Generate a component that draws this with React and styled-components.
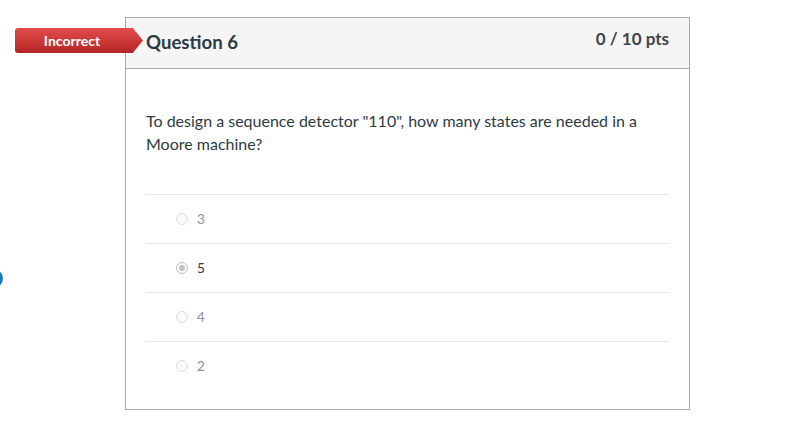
import React from 'react';
import styled, { createGlobalStyle } from 'styled-components';

const GlobalStyle = createGlobalStyle`
    body {
        margin: 0;
        background: white;
        font-family: Lato, "Noto Sans", sans-serif;
        color: #2d3b45;
    }
`;

const answers = [
    { text: '3', selected: false },
    { text: '5', selected: true },
    { text: '4', selected: false },
    { text: '2', selected: false },
];

function App() {
    return (
        <Page>
            <GlobalStyle />
            <SideDot />
            <Card>
                <Badge>Incorrect</Badge>
                <Header>
                    <Title>Question 6</Title>
                    <Points>0 / 10 pts</Points>
                </Header>
                <Body>
                    <QuestionText>
                        To design a sequence detector "110", how many states are needed in a Moore machine?
                    </QuestionText>
                    <AnswerList>
                        {answers.map(a => (
                            <AnswerRow key={a.text}>
                                <Radio selected={a.selected} />
                                <AnswerText selected={a.selected}>{a.text}</AnswerText>
                            </AnswerRow>
                        ))}
                    </AnswerList>
                </Body>
            </Card>
        </Page>
    );
}

const Page = styled.div`
    position: relative;
    width: 799px;
    height: 435px;
    overflow: hidden;
    padding: 17px 0 0 125px;
    box-sizing: border-box;
`;

const SideDot = styled.div`
    position: absolute;
    left: -16px;
    top: 269px;
    width: 19px;
    height: 19px;
    border-radius: 50%;
    background: #1a7bbd;
`;

const Card = styled.div`
    position: relative;
    width: 565px;
    border: 1px solid #a8a8a8;
    box-sizing: border-box;
    background: white;
`;

const Badge = styled.div`
    position: absolute;
    left: -111px;
    top: 10px;
    width: 128px;
    height: 25px;
    box-sizing: border-box;
    padding-right: 14px;
    display: flex;
    align-items: center;
    justify-content: center;
    color: white;
    font-weight: bold;
    font-size: 14px;
    background: linear-gradient(#e34c4c, #b52525);
    border-radius: 3px 0 0 3px;
    clip-path: polygon(0 0, 92% 0, 100% 50%, 92% 100%, 0 100%);
`;

const Header = styled.div`
    display: flex;
    justify-content: space-between;
    align-items: flex-start;
    height: 50px;
    padding: 0 20px 0 20px;
    background: #f5f5f5;
    border-bottom: 1px solid #a8a8a8;
`;

const Title = styled.h2`
    margin: 13px 0 0;
    font-size: 18.6px;
    font-weight: bold;
    color: #2d3b45;
`;

const Points = styled.div`
    margin-top: 10px;
    font-size: 17px;
    font-weight: bold;
    color: #3d454c;
`;

const Body = styled.div`
    padding: 40px 20px 19px 20px;
`;

const QuestionText = styled.p`
    margin: 0 0 39px;
    font-size: 16px;
    line-height: 23px;
    color: #2d3b45;
`;

const AnswerList = styled.div`
    display: flex;
    flex-direction: column;
`;

const AnswerRow = styled.div`
    display: flex;
    align-items: center;
    height: 49px;
    padding-left: 30px;
    border-top: 1px solid #e6e6e6;
    box-sizing: border-box;
`;

const Radio = styled.span`
    position: relative;
    width: 12px;
    height: 12px;
    border-radius: 50%;
    border: 1px solid #dcdcdc;
    background: #fafafa;
    box-sizing: border-box;
    margin-right: 9px;
    border-color: ${p => (p.selected ? '#c0c0c0' : '#dcdcdc')};

    &::after {
        content: '';
        display: ${p => (p.selected ? 'block' : 'none')};
        position: absolute;
        left: 2px;
        top: 2px;
        width: 6px;
        height: 6px;
        border-radius: 50%;
        background: #c3c3c3;
    }
`;

const AnswerText = styled.span`
    font-size: 13.5px;
    color: ${p => (p.selected ? '#2d3b45' : '#8b9198')};
`;

export default App;
